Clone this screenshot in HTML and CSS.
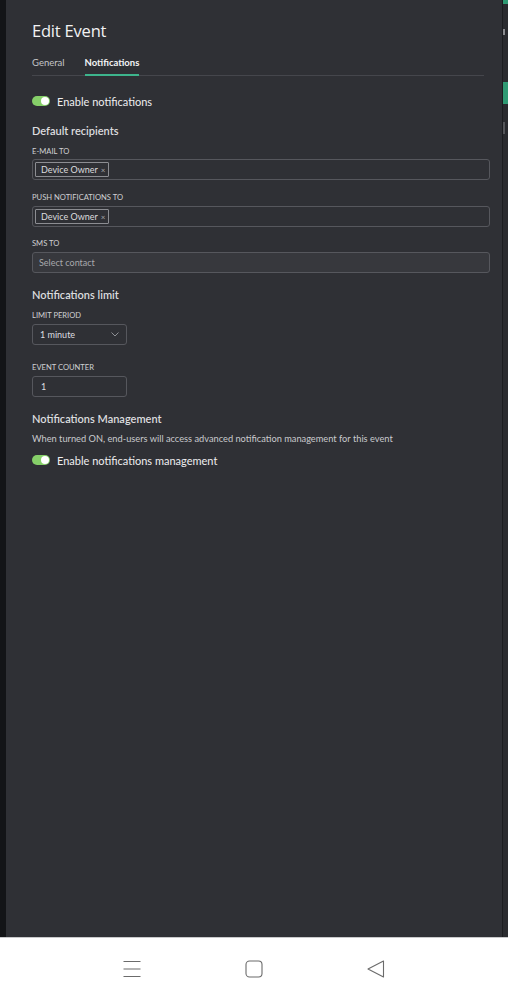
FILE: index.html
```html
<!DOCTYPE html>
<html>
<head>
<meta charset="utf-8">
<link rel="stylesheet" href="styles.css">
</head>
<body>
<div class="screen">
  <div class="main">
    <div class="edge-left"></div>
    <div class="panel">
      <h1 class="title">Edit Event</h1>
      <div class="tabs">
        <div class="tab">General</div>
        <div class="tab active">Notifications</div>
      </div>
      <div class="toggle-row first">
        <span class="toggle"><span class="knob"></span></span>
        <span class="toggle-label">Enable notifications</span>
      </div>

      <div class="heading h-recipients">Default recipients</div>
      <div class="label l-email">E-MAIL TO</div>
      <div class="field"><span class="chip">Device Owner <span class="x">×</span></span></div>
      <div class="label l-push">PUSH NOTIFICATIONS TO</div>
      <div class="field"><span class="chip">Device Owner <span class="x">×</span></span></div>
      <div class="label l-sms">SMS TO</div>
      <div class="field filled"><span class="placeholder">Select contact</span></div>

      <div class="heading h-limit">Notifications limit</div>
      <div class="label l-period">LIMIT PERIOD</div>
      <div class="field small select">
        <span class="value">1 minute</span>
        <svg class="chev" width="8" height="5" viewBox="0 0 8 5"><path d="M0.5 0.5 L4 4 L7.5 0.5" fill="none" stroke="#9a9ba0" stroke-width="0.9"/></svg>
      </div>
      <div class="label l-counter">EVENT COUNTER</div>
      <div class="field small"><span class="value num">1</span></div>

      <div class="heading h-mgmt">Notifications Management</div>
      <div class="desc">When turned ON, end-users will access advanced notification management for this event</div>
      <div class="toggle-row second">
        <span class="toggle"><span class="knob"></span></span>
        <span class="toggle-label">Enable notifications management</span>
      </div>
    </div>
    <div class="edge-right">
      <div class="bit green b1"></div>
      <div class="bit light b2"></div>
      <div class="bit green b3"></div>
      <div class="bit grey b4"></div>
    </div>
  </div>
  <div class="navbar">
    <svg width="18" height="18" viewBox="0 0 18 18"><path d="M0.5 1.5 H17.5 M0.5 9 H17.5 M0.5 16.5 H17.5" stroke="#6b6b6b" stroke-width="1.1" fill="none"/></svg>
    <svg width="18" height="18" viewBox="0 0 18 18"><rect x="1" y="1" width="16" height="16" rx="3.5" ry="3.5" fill="none" stroke="#6b6b6b" stroke-width="1.1"/></svg>
    <svg width="18" height="18" viewBox="0 0 18 18"><path d="M16.5 1 L16.5 17 L1 9 Z" fill="none" stroke="#6b6b6b" stroke-width="1.1" stroke-linejoin="round"/></svg>
  </div>
</div>
</body>
</html>
```

FILE: styles.css
```css
html, body {
  margin: 0;
  padding: 0;
}
body {
  width: 508px;
  height: 1000px;
  overflow: hidden;
  font-family: Lato, "Noto Sans", sans-serif;
  background: #ffffff;
}
.screen {
  display: flex;
  flex-direction: column;
  height: 1000px;
}
.main {
  display: flex;
  height: 937px;
  border-bottom: 1px solid #c9c9cb;
}
.edge-left {
  width: 6px;
  background: #131417;
}
.panel {
  flex: 1;
  background: #2f3035;
  padding: 0 12px 0 26px;
  color: #e6e6e8;
}
.edge-right {
  width: 5px;
  background: #2a2b2f;
  border-left: 1px solid #1c1d20;
  display: flex;
  flex-direction: column;
}
.bit { width: 5px; }
.green { background: #2f9a73; }
.light { background: #8a8b8f; }
.grey { background: #55565a; }
.b1 { height: 4px; }
.b2 { height: 6px; margin-top: 25px; width: 2px; }
.b3 { height: 22px; margin-top: 47px; }
.b4 { height: 12px; margin-top: 18px; width: 2px; }

.title {
  margin: 21px 0 0;
  font-family: "Open Sans", Lato, sans-serif;
  font-weight: 400;
  font-size: 16.5px;
  line-height: 20px;
  color: #f2f2f3;
  letter-spacing: -0.2px;
}
.tabs {
  display: flex;
  gap: 20px;
  margin: 14px 6px 0 0;
  border-bottom: 1px solid #45464c;
}
.tab {
  font-size: 9.5px;
  line-height: 14px;
  padding-top: 1px;
  padding-bottom: 4px;
  color: #c4c5c8;
}
.tab.active {
  color: #f4f4f5;
  font-weight: 700;
  border-bottom: 2px solid #3db48c;
  margin-bottom: -1px;
}
.toggle-row {
  display: flex;
  align-items: center;
  height: 14px;
}
.toggle-row.first { margin-top: 18px; }
.toggle-row.second { margin-top: 8px; }
.toggle {
  width: 18px;
  height: 10px;
  border-radius: 5px;
  background: #86cf69;
  display: flex;
  justify-content: flex-end;
  align-items: center;
  padding: 0 1px;
  box-sizing: border-box;
}
.knob {
  width: 8px;
  height: 8px;
  border-radius: 50%;
  background: #ffffff;
}
.toggle-label {
  margin-left: 7px;
  font-size: 11px;
  color: #eeeef0;
}
.heading {
  font-size: 11px;
  line-height: 14px;
  font-weight: 600;
  color: #dcdcdf;
  margin-top: 15px;
}
.h-recipients { margin-top: 16px; }
.label {
  font-size: 7.6px;
  line-height: 10px;
  color: #cfd0d3;
  margin-top: 12px;
}
.l-email, .l-period { margin-top: 8px; }
.l-sms { margin-top: 11px; }
.l-counter { margin-top: 17px; }
.field {
  margin-top: 3px;
  height: 21px;
  box-sizing: border-box;
  border: 1px solid #56575d;
  border-radius: 3px;
  display: flex;
  align-items: center;
  padding: 0 2px;
}
.label + .field { margin-top: 4px; }
.l-email + .field { margin-top: 3px; }
.field.filled {
  background: #37383d;
  padding: 0 6px;
}
.chip {
  height: 15px;
  box-sizing: border-box;
  border: 1px solid #8c8d92;
  border-radius: 1px;
  display: flex;
  align-items: center;
  padding: 0 3px 0 5px;
  font-size: 9px;
  color: #dcdcdf;
}
.chip .x {
  margin-left: 3px;
  color: #a5a6aa;
  font-size: 8px;
}
.placeholder {
  font-size: 9px;
  color: #a7a8ac;
}
.field.small {
  width: 95px;
  padding: 0 6px 0 7px;
}
.field.select { justify-content: space-between; }
.value {
  font-size: 9px;
  color: #dedee0;
}
.value.num { margin-left: 1px; }
.chev { margin-right: 1px; }
.desc {
  margin-top: 7px;
  font-size: 9.25px;
  line-height: 12px;
  color: #c9cacd;
}
.navbar {
  flex: 1;
  background: #ffffff;
  display: flex;
  align-items: center;
  justify-content: center;
  gap: 104px;
  padding-bottom: 1px;
}
```
